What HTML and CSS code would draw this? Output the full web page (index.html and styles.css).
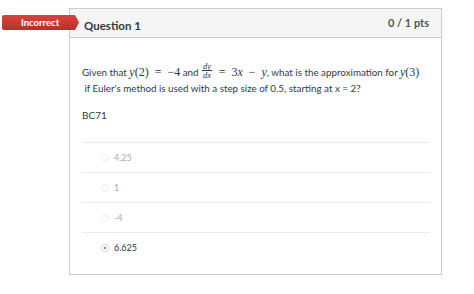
FILE: index.html
```html
<!DOCTYPE html>
<html>
<head>
<meta charset="utf-8">
<link rel="stylesheet" href="styles.css">
</head>
<body>
<div class="page">
  <div class="badge">Incorrect</div>
  <div class="card">
    <div class="card-header">
      <span class="title">Question 1</span>
      <span class="pts">0 / 1 pts</span>
    </div>
    <div class="card-body">
      <p class="question">Given that <span class="m"><i>y</i>(2) <span class="op">=</span> −4</span> and <span class="frac"><span class="num"><i>dy</i></span><span class="den"><i>dx</i></span></span> <span class="m"><span class="op">=</span> 3<i>x</i> <span class="op">−</span> <i>y</i></span>, what is the approximation for <span class="m"><i>y</i>(3)</span><br>&nbsp;if Euler's method is used with a step size of 0.5, starting at x = 2?</p>
      <p class="code">BC71</p>
      <div class="answers">
        <div class="answer"><span class="radio"></span><span class="label">4.25</span></div>
        <div class="answer"><span class="radio"></span><span class="label">1</span></div>
        <div class="answer"><span class="radio"></span><span class="label">-4</span></div>
        <div class="answer selected"><span class="radio"></span><span class="label">6.625</span></div>
      </div>
    </div>
  </div>
</div>
</body>
</html>
```
FILE: styles.css
```css
* { box-sizing: border-box; }
html, body { margin: 0; padding: 0; background: #fff; }
body { font-family: Lato, "Open Sans", sans-serif; color: #2d3b45; }
.page { position: relative; padding: 8px 0 0 69px; width: 474px; height: 294px; }
.badge {
  position: absolute; left: 2px; top: 15px; width: 77px; height: 15px;
  background: linear-gradient(#d8443e, #b8302b);
  clip-path: polygon(0 0, 73px 0, 77px 50%, 73px 100%, 0 100%);
  border-radius: 2px 0 0 2px;
  color: #fff; font-size: 9.5px; font-weight: 700; line-height: 15px;
  padding-left: 19px; z-index: 2;
}
.card { width: 373px; height: 267px; border: 1px solid #c7cdd1; }
.card-header {
  height: 29px; background: #f5f5f5; border-bottom: 1px solid #c7cdd1;
  display: flex; justify-content: space-between; align-items: center;
  padding: 0 12px 0 14px;
}
.title { font-size: 11.5px; font-weight: 700; color: #2d3b45; padding-top: 4px; }
.pts { font-size: 11px; font-weight: 700; color: #555; padding-bottom: 2px; }
.card-body { padding: 0 11px 0 12px; }
.question { margin: 26px 0 0 0; font-size: 9.8px; line-height: 16px; color: #2d3b45; }
.m { font-family: "Liberation Serif", "DejaVu Serif", serif; font-size: 12px; }
.m i, .frac i { font-family: "Liberation Serif", serif; }
.op { padding: 0 3px; }
.frac { display: inline-flex; flex-direction: column; vertical-align: middle; font-family: "Liberation Serif", serif; font-size: 8.5px; line-height: 8px; text-align: center; margin: -5px 1px 0; position: relative; top: -1px; }
.frac .num { border-bottom: 0.6px solid #2d3b45; padding: 0 1px; }
.code { margin: 12px 0 0 0; font-size: 10px; line-height: 14px; }
.answers { margin-top: 20px; }
.answer {
  height: 30px; border-top: 1px solid #e8eaec; display: flex; align-items: center;
  padding-left: 19px; font-size: 9px; color: #aaaaaa;
}
.radio { width: 8px; height: 8px; border-radius: 50%; border: 1px solid #ececec; margin-right: 5px; display: flex; align-items: center; justify-content: center; }
.selected { color: #333; }
.selected .radio { border-color: #d4d4d4; }
.selected .radio::after { content: ""; width: 2px; height: 2px; border-radius: 50%; background: #666; }
```
